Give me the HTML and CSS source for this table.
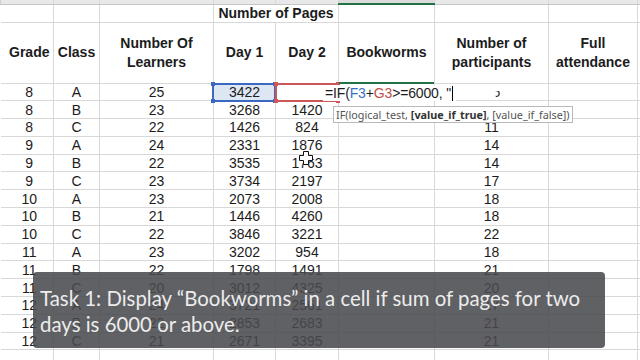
FILE: index.html
```html
<!DOCTYPE html>
<html>
<head>
<meta charset="utf-8">
<link rel="stylesheet" href="styles.css">
</head>
<body>
<div class="sheet">
  <table class="grid">
    <colgroup>
      <col class="c-grade"><col class="c-class"><col class="c-learn"><col class="c-day1"><col class="c-day2"><col class="c-book"><col class="c-part"><col class="c-full"><col class="c-rest">
    </colgroup>
    <tr class="colhead">
      <td></td><td></td><td></td><td></td><td></td><td class="active-col"></td><td></td><td></td><td></td>
    </tr>
    <tr class="title">
      <td></td><td></td><td></td><td colspan="2" class="bold">Number of Pages</td><td></td><td></td><td></td><td></td>
    </tr>
    <tr class="head">
      <td class="bold first">Grade</td><td class="bold">Class</td><td class="bold">Number Of<br>Learners</td><td class="bold">Day 1</td><td class="bold">Day 2</td><td class="bold">Bookworms</td><td class="bold">Number of<br>participants</td><td class="bold">Full<br>attendance</td><td></td>
    </tr>
    <tr><td class="first">8</td><td>A</td><td>25</td><td class="sel">3422</td><td></td><td></td><td><span class="frag">5</span></td><td></td><td></td></tr>
    <tr><td class="first">8</td><td>B</td><td>23</td><td>3268</td><td>1420</td><td></td><td></td><td></td><td></td></tr>
    <tr><td class="first">8</td><td>C</td><td>22</td><td>1426</td><td>824</td><td></td><td>11</td><td></td><td></td></tr>
    <tr><td class="first">9</td><td>A</td><td>24</td><td>2331</td><td>1876</td><td></td><td>14</td><td></td><td></td></tr>
    <tr><td class="first">9</td><td>B</td><td>22</td><td>3535</td><td>1763</td><td></td><td>14</td><td></td><td></td></tr>
    <tr><td class="first">9</td><td>C</td><td>23</td><td>3734</td><td>2197</td><td></td><td>17</td><td></td><td></td></tr>
    <tr><td class="first">10</td><td>A</td><td>23</td><td>2073</td><td>2008</td><td></td><td>18</td><td></td><td></td></tr>
    <tr><td class="first">10</td><td>B</td><td>21</td><td>1446</td><td>4260</td><td></td><td>18</td><td></td><td></td></tr>
    <tr><td class="first">10</td><td>C</td><td>22</td><td>3846</td><td>3221</td><td></td><td>22</td><td></td><td></td></tr>
    <tr><td class="first">11</td><td>A</td><td>23</td><td>3202</td><td>954</td><td></td><td>18</td><td></td><td></td></tr>
    <tr><td class="first">11</td><td>B</td><td>22</td><td>1798</td><td>1491</td><td></td><td>21</td><td></td><td></td></tr>
    <tr><td class="first">11</td><td>C</td><td>20</td><td>3012</td><td>4325</td><td></td><td>20</td><td></td><td></td></tr>
    <tr><td class="first">12</td><td>A</td><td>24</td><td>3721</td><td>2561</td><td></td><td>17</td><td></td><td></td></tr>
    <tr><td class="first">12</td><td>B</td><td>22</td><td>2853</td><td>2683</td><td></td><td>21</td><td></td><td></td></tr>
    <tr><td class="first">12</td><td>C</td><td>21</td><td>2671</td><td>3395</td><td></td><td>21</td><td></td><td></td></tr>
    <tr><td class="first"></td><td></td><td></td><td></td><td></td><td></td><td></td><td></td><td></td></tr>
  </table>

  <div class="box-blue"><i class="k tl"></i><i class="k tr"></i><i class="k bl"></i><i class="k br"></i></div>
  <div class="box-red"><i class="k tl"></i><i class="k tr"></i><i class="k bl"></i><i class="k br"></i></div>
  <div class="active-top"></div>
  <div class="editor">=IF(<span class="ref-f">F3</span>+<span class="ref-g">G3</span>&gt;=6000, "<span class="caret"></span></div>
  <div class="tip">IF(logical_test, <b>[value_if_true]</b>, [value_if_false])</div>
  <svg class="cursor" width="14" height="14" viewBox="0 0 14 14"><path d="M4.5 0.5h5v4h4v5h-4v4h-5v-4h-4v-5h4z" fill="#fff" stroke="#111" stroke-width="1"/></svg>

  <div class="caption">Task 1: Display “Bookworms” in a cell if sum of pages for two days is 6000 or above.</div>
</div>
</body>
</html>
```
FILE: styles.css
```css
html, body {
  margin: 0;
  padding: 0;
  background: #fff;
}
.sheet {
  position: relative;
  width: 640px;
  height: 360px;
  overflow: hidden;
  font-family: "Liberation Sans", Arial, sans-serif;
  color: #1c1c1c;
}
.grid {
  border-collapse: collapse;
  table-layout: fixed;
  width: 660px;
}
.c-grade { width: 53px; }
.c-class { width: 46px; }
.c-learn { width: 114px; }
.c-day1 { width: 62px; }
.c-day2 { width: 63px; }
.c-book { width: 96px; }
.c-part { width: 114px; }
.c-full { width: 89px; }
.c-rest { width: 23px; }
.grid td {
  border: 1px solid #d8d8d8;
  padding: 0;
  text-align: center;
  font-size: 14px;
  line-height: 16px;
  height: 17.8px;
  box-sizing: border-box;
  white-space: nowrap;
  overflow: hidden;
}
.grid td.first {
  border-left: none;
  padding-left: 5px;
}
.grid .colhead td {
  height: 4px;
  background: #e8e8e8;
  border-top: none;
  border-bottom: 1px solid #c6c6c6;
  border-left-color: #d0d0d0;
}
.grid .colhead td.active-col {
  background: #dcdcdc;
  border-bottom: 2px solid #217346;
}
.grid .title td {
  height: 18px;
  border-left-color: #d8d8d8;
}
.grid .title td:first-child { border-left: none; }
.grid .head td {
  height: 61px;
  line-height: 19px;
}
.bold { font-weight: bold; }
.grid td.sel { background: #dde6f3; }
.frag {
  display: inline-block;
  color: #333;
  clip-path: inset(45% 0 0 40%);
  margin-left: 10px;
}

.box-blue, .box-red {
  position: absolute;
  top: 83px;
  height: 19px;
  box-sizing: border-box;
}
.box-blue {
  left: 212px;
  width: 64px;
  border: 2px solid #3b69c2;
}
.box-red {
  left: 275px;
  width: 64px;
  border: 2px solid #cf5656;
}
.k {
  position: absolute;
  width: 4px;
  height: 4px;
}
.box-blue .k { background: #3b69c2; }
.box-red .k { background: #cf5656; }
.k.tl { left: -3px; top: -3px; }
.k.tr { right: -3px; top: -3px; }
.k.bl { left: -3px; bottom: -3px; }
.k.br { right: -3px; bottom: -3px; }

.active-top {
  position: absolute;
  left: 339px;
  top: 82px;
  width: 95px;
  height: 2px;
  background: #217346;
}
.editor {
  position: absolute;
  left: 323px;
  top: 85px;
  height: 16px;
  padding: 0 3px 0 2px;
  background: #fff;
  font-size: 14px;
  line-height: 16px;
  letter-spacing: -0.15px;
  color: #1c1c1c;
  white-space: nowrap;
}
.ref-f { color: #3b6fc4; }
.ref-g { color: #c0504d; }
.caret {
  display: inline-block;
  width: 1px;
  height: 15px;
  background: #000;
  vertical-align: -3px;
  margin-left: 1px;
}
.tip {
  position: absolute;
  left: 333px;
  top: 106px;
  width: 240px;
  height: 17px;
  box-sizing: border-box;
  border: 1px solid #b9b9b9;
  background: #fff;
  font-family: "Noto Sans", "Open Sans", sans-serif;
  font-size: 10.8px;
  line-height: 15px;
  padding: 0 2px;
  color: #555;
  white-space: nowrap;
}
.tip b { color: #333; }
.cursor {
  position: absolute;
  left: 299px;
  top: 151px;
}
.caption {
  position: absolute;
  left: 33px;
  top: 272px;
  width: 572px;
  height: 76px;
  box-sizing: border-box;
  padding: 13px 4px 0 7px;
  border-radius: 4px;
  background: rgba(72, 73, 78, 0.87);
  color: #ececec;
  font-family: Lato, "Open Sans", sans-serif;
  font-size: 20.4px;
  line-height: 26px;
}
```
